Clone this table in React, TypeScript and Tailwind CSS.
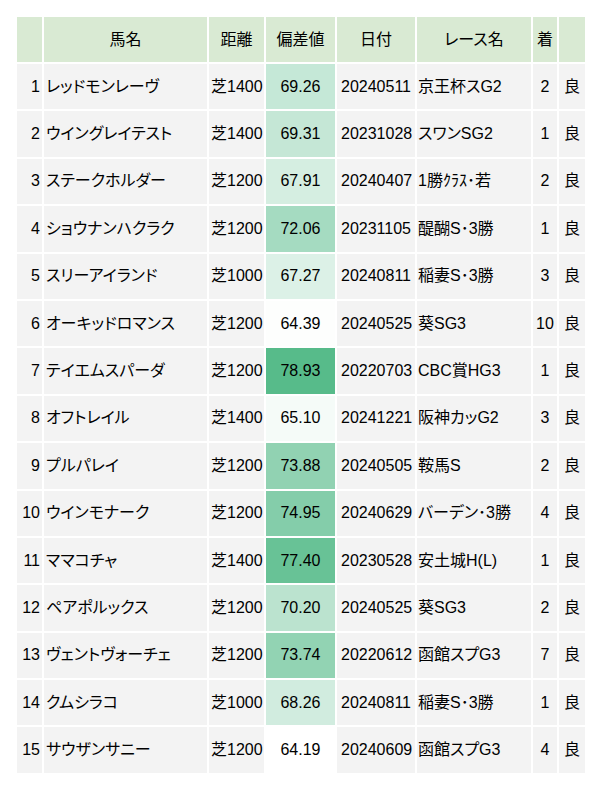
import React from "react";

type Row = [number, string, string, string, string, string, string, string];

const rows: Row[] = [
  [1, "レッドモンレーヴ", "芝1400", "69.26", "20240511", "京王杯スG2", "2", "良"],
  [2, "ウイングレイテスト", "芝1400", "69.31", "20231028", "スワンSG2", "1", "良"],
  [3, "ステークホルダー", "芝1200", "67.91", "20240407", "1勝ｸﾗｽ･若", "2", "良"],
  [4, "ショウナンハクラク", "芝1200", "72.06", "20231105", "醍醐S･3勝", "1", "良"],
  [5, "スリーアイランド", "芝1000", "67.27", "20240811", "稲妻S･3勝", "3", "良"],
  [6, "オーキッドロマンス", "芝1200", "64.39", "20240525", "葵SG3", "10", "良"],
  [7, "テイエムスパーダ", "芝1200", "78.93", "20220703", "CBC賞HG3", "1", "良"],
  [8, "オフトレイル", "芝1400", "65.10", "20241221", "阪神カッG2", "3", "良"],
  [9, "プルパレイ", "芝1200", "73.88", "20240505", "鞍馬S", "2", "良"],
  [10, "ウインモナーク", "芝1200", "74.95", "20240629", "バーデン･3勝", "4", "良"],
  [11, "ママコチャ", "芝1400", "77.40", "20230528", "安土城H(L)", "1", "良"],
  [12, "ペアポルックス", "芝1200", "70.20", "20240525", "葵SG3", "2", "良"],
  [13, "ヴェントヴォーチェ", "芝1200", "73.74", "20220612", "函館スプG3", "7", "良"],
  [14, "クムシラコ", "芝1000", "68.26", "20240811", "稲妻S･3勝", "1", "良"],
  [15, "サウザンサニー", "芝1200", "64.19", "20240609", "函館スプG3", "4", "良"],
];

const MIN = 64.19;
const MAX = 78.93;

function scaleColor(v: number): string {
  const t = Math.max(0, Math.min(1, (v - MIN) / (MAX - MIN)));
  const r = Math.round(255 - (255 - 87) * t);
  const g = Math.round(255 - (255 - 187) * t);
  const b = Math.round(255 - (255 - 138) * t);
  return `rgb(${r}, ${g}, ${b})`;
}

const headers = ["", "馬名", "距離", "偏差値", "日付", "レース名", "着", ""];

export default function App() {
  return (
    <div className="bg-white w-[601px] h-[786px] pt-[17px] pl-[17px] text-[16px] text-black [font-family:'Liberation_Sans','Noto_Sans_CJK_JP',sans-serif] [font-feature-settings:'palt'] leading-none">
      <div className="grid grid-cols-[25px_163px_55px_69px_78px_114px_24px_26px] grid-rows-[45px_repeat(15,45.4px)] gap-[2px] w-[568px]">
        {headers.map((h, i) => (
          <div key={"h" + i} className="bg-[#d9ead3] flex items-center justify-center">
            {h}
          </div>
        ))}
        {rows.map((r) => (
          <React.Fragment key={r[0]}>
            <div className="bg-[#f3f3f3] flex items-center justify-end pr-[2px]">{r[0]}</div>
            <div className="bg-[#f3f3f3] flex items-center pl-[2px] whitespace-nowrap">{r[1]}</div>
            <div className="bg-[#f3f3f3] flex items-center pl-[2px] whitespace-nowrap">{r[2]}</div>
            <div
              className="flex items-center justify-center"
              style={{ backgroundColor: scaleColor(parseFloat(r[3])) }}
            >
              {r[3]}
            </div>
            <div className="bg-[#f3f3f3] flex items-center pl-[4px]">{r[4]}</div>
            <div className="bg-[#f3f3f3] flex items-center pl-[1px] whitespace-nowrap">{r[5]}</div>
            <div className="bg-[#f3f3f3] flex items-center justify-center">{r[6]}</div>
            <div className="bg-[#f3f3f3] flex items-center justify-center">{r[7]}</div>
          </React.Fragment>
        ))}
      </div>
    </div>
  );
}
